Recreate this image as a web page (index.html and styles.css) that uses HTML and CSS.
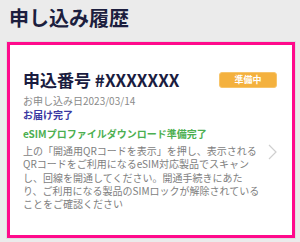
FILE: index.html
```html
<!DOCTYPE html>
<html lang="ja">
<head>
<meta charset="utf-8">
<title>申し込み履歴</title>
<link rel="stylesheet" href="styles.css">
</head>
<body>
<h1 class="page-title">申し込み履歴</h1>
<section class="card">
  <div class="card-head">
    <h2 class="order-no">申込番号 #XXXXXXX</h2>
    <span class="badge">準備中</span>
  </div>
  <div class="card-body">
    <div class="info">
      <p class="date">お申し込み日2023/03/14</p>
      <p class="delivered">お届け完了</p>
      <p class="esim">eSIMプロファイルダウンロード準備完了</p>
      <p class="desc">上の「開通用QRコードを表示」を押し、表示される<br>QRコードをご利用になるeSIM対応製品でスキャン<br>し、回線を開通してください。開通手続きにあた<br>り、ご利用になる製品のSIMロックが解除されている<br>ことをご確認ください</p>
    </div>
    <svg class="chevron" width="9" height="16" viewBox="0 0 9 16" aria-hidden="true">
      <polyline points="1,1 8,8 1,15" fill="none" stroke="#cfcfcf" stroke-width="1.2"/>
    </svg>
  </div>
</section>
</body>
</html>
```
FILE: styles.css
```css
html, body {
  margin: 0;
  padding: 0;
}
body {
  width: 300px;
  height: 242px;
  background: #ebebeb;
  font-family: "Noto Sans CJK JP", "Noto Sans", sans-serif;
  overflow: hidden;
}
.page-title {
  margin: 0 0 10px 0;
  padding: 4px 0 0 9px;
  font-size: 20px;
  line-height: 28px;
  font-weight: 700;
  color: #1c1e3e;
}
.card {
  margin-left: 7px;
  width: 288px;
  height: 196px;
  box-sizing: border-box;
  border: 3px solid #ff0a8c;
  background: #fff;
  box-shadow: 0 0 0 1px rgba(0, 0, 0, 0.05);
  padding: 23px 15px 0 13px;
}
.card-head {
  display: flex;
  align-items: center;
  justify-content: space-between;
  height: 24px;
}
.order-no {
  margin: 0;
  font-size: 17px;
  line-height: 24px;
  font-weight: 700;
  color: #1a1c40;
}
.badge {
  width: 58px;
  height: 16px;
  box-sizing: border-box;
  background: #f4b13e;
  border: 1px solid #f7c46a;
  border-radius: 3px;
  color: #fff;
  font-size: 9px;
  font-weight: 700;
  line-height: 14px;
  text-align: center;
}
.card-body {
  display: flex;
  align-items: center;
  justify-content: space-between;
  margin-top: 2px;
}
.info {
  width: 242px;
}
.info p {
  margin: 0;
  font-size: 10px;
  line-height: 14px;
  white-space: nowrap;
}
.date {
  color: #8a8a8a;
}
.delivered {
  color: #3a38a2;
  font-weight: 700;
}
.esim {
  margin-top: 5px !important;
  color: #4caf50;
  font-weight: 700;
}
.info .desc {
  margin-top: 3px;
  line-height: 13.3px;
  color: #7e7e7e;
}
.chevron {
  display: block;
  flex: none;
}
```
